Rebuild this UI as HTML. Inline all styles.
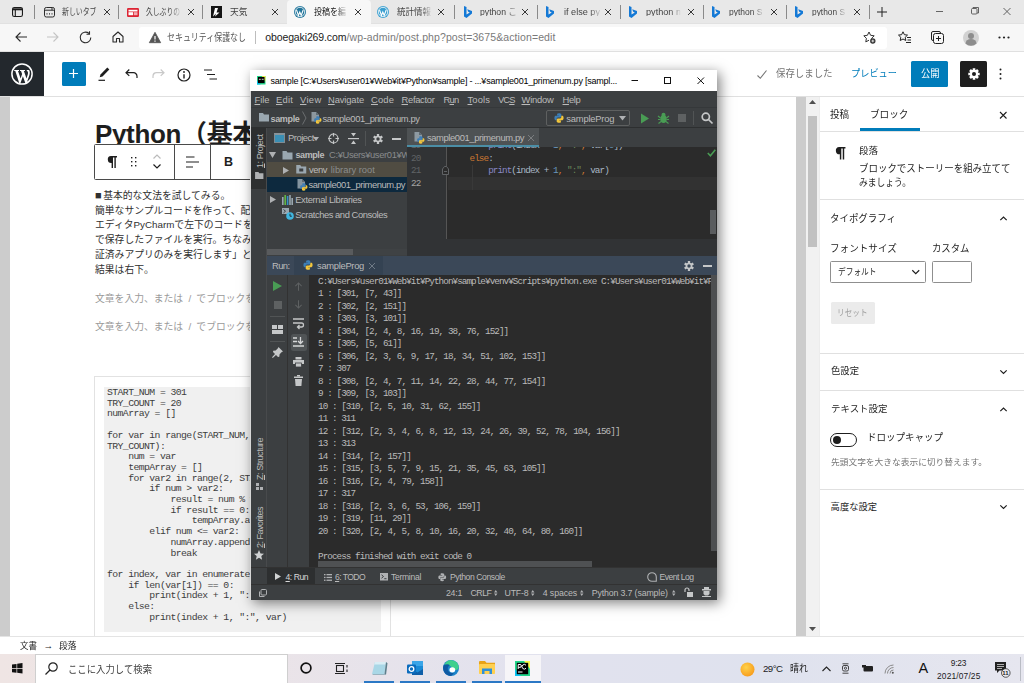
<!DOCTYPE html>
<html lang="ja">
<head>
<meta charset="utf-8">
<title>screenshot</title>
<style>
*{box-sizing:border-box;margin:0;padding:0}
html,body{width:1024px;height:683px;overflow:hidden;background:#fff}
body{position:relative;font-family:"Liberation Sans","Noto Sans CJK JP",sans-serif;font-size:10px;color:#1e1e1e}
.abs{position:absolute}
.t{position:absolute;white-space:nowrap;line-height:1}
svg{position:absolute;overflow:visible}
/* ---------- browser chrome ---------- */
#tabstrip{left:0;top:0;width:1024px;height:24px;background:#e8e8e8;border-bottom:1.500px solid #e1e1e1}
#toolbar{left:0;top:24px;width:1024px;height:28px;background:#f7f7f7;border-bottom:1px solid #e0e0e0}
#addr{left:139px;top:27px;width:748px;height:21.500px;background:#fff;border-radius:3px}
.tabtxt{position:absolute;top:6.500px;font-size:9.500px;color:#444;white-space:nowrap;line-height:1;overflow:hidden}
.tabx{position:absolute;top:5px;font-size:11px;color:#222;line-height:1}
.tabsep{position:absolute;top:5px;width:1px;height:14px;background:#8a8a8a}
/* ---------- WP ---------- */
#wphead{left:0;top:52px;width:1024px;height:44.600px;background:#fff;border-bottom:1px solid #e0e0e0}
#wplogo{left:0;top:52px;width:44px;height:44px;background:#23282d}
#leftstrip{left:0;top:96.600px;width:10px;height:539.400px;background:#cccccc}
#canvas{left:10px;top:96.600px;width:786px;height:539.400px;background:#fff}
#scroll{left:806px;top:96.600px;width:13px;height:539.400px;background:#f1f1f1}
#sidebar{left:819px;top:96.600px;width:205px;height:539.400px;background:#fff}
#footer{left:0;top:636px;width:1024px;height:18px;background:#fff;border-top:1px solid #e4e4e4}
#taskbar{left:0;top:654px;width:1024px;height:29px;background:linear-gradient(90deg,#efe5e4 0,#ebe4e8 25%,#e2e2ee 50%,#dfe2ee 75%,#e6e6ef 100%)}
/* ---------- PyCharm (children use page coords via #pcabs) ---------- */
#pc{left:250.400px;top:69.700px;width:466.600px;height:530px;background:#3c3f41;box-shadow:3px 3px 12px rgba(0,0,0,.5)}
#pcabs{position:absolute;left:-250.400px;top:-69.700px;width:1024px;height:683px}
#pcabs .b{position:absolute}
.ui{position:absolute;white-space:nowrap;line-height:12px;font-size:9.4px;color:#bbbbbb}
.con{position:absolute;font-family:"Liberation Mono","IPAGothic",monospace;font-size:9.3px;letter-spacing:-0.94px;color:#bbbbbb;white-space:pre;line-height:12.5px}
.kw{color:#cc7832}.bi{color:#8888c6}.nu{color:#6897bb}.st{color:#6a8759}
</style>
</head>
<body>
<!-- BROWSER -->
<div id="tabstrip" class="abs"></div>
<div id="toolbar" class="abs"></div>
<div class="abs" style="left:287px;top:0;width:84px;height:24.500px;background:#f7f7f7;border-radius:4px 4px 0 0"></div>
<div id="addr" class="abs"></div>
<!-- tab actions icon -->
<svg style="left:12px;top:6.500px" width="11" height="10" viewBox="0 0 11 10" fill="none" stroke="#1b1b1b" stroke-width="1.100"><rect x=".55" y=".55" width="9.900" height="8.900" rx="1.800"/><path d="M.6 2.300h9.800" stroke-width="2"/><path d="M3.300 2.500v7"/></svg>
<div class="tabsep" style="left:34px"></div>
<!-- tab 1 -->
<svg style="left:43.500px;top:6.500px" width="11" height="10.500" viewBox="0 0 11 10.500" fill="none" stroke="#2b2b2b" stroke-width="1"><rect x=".5" y=".5" width="10" height="9.500" rx="1.800"/><path d="M.5 3.200h7.500M8 .5v2.700h2.500"/><path d="M2.500 6.800h1M5 6.800h1M7.500 6.800h1" stroke-width="1.300"/></svg>
<div class="tabtxt" style="transform-origin:0 50%;transform:scaleX(0.7261);left:62.200px">新しいタブ</div>
<svg class="tx" style="left:104px;top:8.500px" width="6" height="6" viewBox="0 0 6 6" fill="none" stroke="#222" stroke-width=".9"><path d="M0 0l6 6M6 0l-6 6"/></svg>
<div class="tabsep" style="left:118px"></div>
<!-- tab 2 -->
<svg style="left:126.500px;top:7.500px" width="12" height="9" viewBox="0 0 12 9"><rect width="12" height="9" rx="1.200" fill="#dc2433"/><rect x="1.500" y="1.800" width="9" height="1.700" fill="#fff"/><rect x="1.500" y="4.200" width="4.600" height="3" fill="#fff"/><rect x="6.900" y="4.200" width="3.600" height="3" fill="#f4a9af"/></svg>
<div class="tabtxt" style="transform-origin:0 50%;transform:scaleX(0.7156);left:146px;-webkit-mask-image:linear-gradient(90deg,#000 70%,rgba(0,0,0,.15));mask-image:linear-gradient(90deg,#000 70%,rgba(0,0,0,.15))">久しぶりの</div>
<svg style="left:187.500px;top:8.500px" width="6" height="6" viewBox="0 0 6 6" fill="none" stroke="#222" stroke-width=".9"><path d="M0 0l6 6M6 0l-6 6"/></svg>
<div class="tabsep" style="left:202px"></div>
<!-- tab 3 -->
<svg style="left:210.500px;top:6px" width="11" height="12" viewBox="0 0 11 12"><rect width="11" height="12" fill="#151515"/><path d="M2 10.500L4 2h3L5.500 6.500h3L4 10.500l1-3z" fill="#fff"/></svg>
<div class="tabtxt" style="transform-origin:0 50%;transform:scaleX(0.9203);left:230px">天気</div>
<svg style="left:271.500px;top:8.500px" width="6" height="6" viewBox="0 0 6 6" fill="none" stroke="#222" stroke-width=".9"><path d="M0 0l6 6M6 0l-6 6"/></svg>
<!-- tab 4 active -->
<svg style="left:294px;top:5.500px" width="12" height="12" viewBox="0 0 12 12"><circle cx="6" cy="6" r="6" fill="#21759b"/><circle cx="6" cy="6" r="4.700" fill="none" stroke="#fff" stroke-width=".8"/><path d="M2.500 4l2 5.500l1.300-3.500l1.400 3.500l2-5.500" fill="none" stroke="#fff" stroke-width="1.100"/></svg>
<div class="tabtxt" style="transform-origin:0 50%;transform:scaleX(0.8418);left:314px;color:#222;-webkit-mask-image:linear-gradient(90deg,#000 70%,rgba(0,0,0,.15));mask-image:linear-gradient(90deg,#000 70%,rgba(0,0,0,.15))">投稿を編</div>
<svg style="left:354.500px;top:8.500px" width="6" height="6" viewBox="0 0 6 6" fill="none" stroke="#222" stroke-width=".9"><path d="M0 0l6 6M6 0l-6 6"/></svg>
<!-- tab 5 -->
<svg style="left:376.500px;top:5.500px" width="12" height="12" viewBox="0 0 12 12"><circle cx="6" cy="6" r="6" fill="#3a9fd0"/><circle cx="6" cy="6" r="4.700" fill="none" stroke="#fff" stroke-width=".8"/><path d="M2.500 4l2 5.500l1.300-3.500l1.400 3.500l2-5.500" fill="none" stroke="#fff" stroke-width="1.100"/></svg>
<div class="tabtxt" style="transform-origin:0 50%;transform:scaleX(0.8944);left:397px;-webkit-mask-image:linear-gradient(90deg,#000 70%,rgba(0,0,0,.15));mask-image:linear-gradient(90deg,#000 70%,rgba(0,0,0,.15))">統計情報</div>
<svg style="left:437.500px;top:8.500px" width="6" height="6" viewBox="0 0 6 6" fill="none" stroke="#222" stroke-width=".9"><path d="M0 0l6 6M6 0l-6 6"/></svg>
<div class="tabsep" style="left:453.500px"></div>
<!-- tabs 6-10 (bing) -->
<svg style="left:463.500px;top:5.500px" width="8" height="12" viewBox="0 0 8 12"><path d="M0 0l2.500 .9v7.600l3.300-1.900l-1.600-.8l-1-2.500l4.800 1.700v2.400L2.500 12L0 10.500z" fill="#1479d6"/></svg>
<div class="tabtxt" style="transform-origin:0 50%;transform:scaleX(0.9097);left:480px;-webkit-mask-image:linear-gradient(90deg,#000 70%,rgba(0,0,0,.15));mask-image:linear-gradient(90deg,#000 70%,rgba(0,0,0,.15))">python こ</div>
<svg style="left:521.500px;top:8.500px" width="6" height="6" viewBox="0 0 6 6" fill="none" stroke="#222" stroke-width=".9"><path d="M0 0l6 6M6 0l-6 6"/></svg>
<div class="tabsep" style="left:536.500px"></div>
<svg style="left:546px;top:5.500px" width="8" height="12" viewBox="0 0 8 12"><path d="M0 0l2.500 .9v7.600l3.300-1.900l-1.600-.8l-1-2.500l4.800 1.700v2.400L2.500 12L0 10.500z" fill="#1479d6"/></svg>
<div class="tabtxt" style="transform-origin:0 50%;transform:scaleX(0.9600);left:563.500px;-webkit-mask-image:linear-gradient(90deg,#000 70%,rgba(0,0,0,.15));mask-image:linear-gradient(90deg,#000 70%,rgba(0,0,0,.15))">if else py</div>
<svg style="left:605px;top:8.500px" width="6" height="6" viewBox="0 0 6 6" fill="none" stroke="#222" stroke-width=".9"><path d="M0 0l6 6M6 0l-6 6"/></svg>
<div class="tabsep" style="left:620px"></div>
<svg style="left:628.500px;top:5.500px" width="8" height="12" viewBox="0 0 8 12"><path d="M0 0l2.500 .9v7.600l3.300-1.900l-1.600-.8l-1-2.500l4.800 1.700v2.400L2.500 12L0 10.500z" fill="#1479d6"/></svg>
<div class="tabtxt" style="transform-origin:0 50%;transform:scaleX(0.9601);left:646px;-webkit-mask-image:linear-gradient(90deg,#000 70%,rgba(0,0,0,.15));mask-image:linear-gradient(90deg,#000 70%,rgba(0,0,0,.15))">python n</div>
<svg style="left:687.500px;top:8.500px" width="6" height="6" viewBox="0 0 6 6" fill="none" stroke="#222" stroke-width=".9"><path d="M0 0l6 6M6 0l-6 6"/></svg>
<div class="tabsep" style="left:703px"></div>
<svg style="left:712px;top:5.500px" width="8" height="12" viewBox="0 0 8 12"><path d="M0 0l2.500 .9v7.600l3.300-1.900l-1.600-.8l-1-2.500l4.800 1.700v2.400L2.500 12L0 10.500z" fill="#1479d6"/></svg>
<div class="tabtxt" style="transform-origin:0 50%;transform:scaleX(0.8933);left:728.500px;-webkit-mask-image:linear-gradient(90deg,#000 70%,rgba(0,0,0,.15));mask-image:linear-gradient(90deg,#000 70%,rgba(0,0,0,.15))">python S</div>
<svg style="left:770.500px;top:8.500px" width="6" height="6" viewBox="0 0 6 6" fill="none" stroke="#222" stroke-width=".9"><path d="M0 0l6 6M6 0l-6 6"/></svg>
<div class="tabsep" style="left:786px"></div>
<svg style="left:795px;top:5.500px" width="8" height="12" viewBox="0 0 8 12"><path d="M0 0l2.500 .9v7.600l3.300-1.900l-1.600-.8l-1-2.500l4.800 1.700v2.400L2.500 12L0 10.500z" fill="#1479d6"/></svg>
<div class="tabtxt" style="transform-origin:0 50%;transform:scaleX(0.8800);left:812px;-webkit-mask-image:linear-gradient(90deg,#000 70%,rgba(0,0,0,.15));mask-image:linear-gradient(90deg,#000 70%,rgba(0,0,0,.15))">python S</div>
<svg style="left:854px;top:8.500px" width="6" height="6" viewBox="0 0 6 6" fill="none" stroke="#222" stroke-width=".9"><path d="M0 0l6 6M6 0l-6 6"/></svg>
<div class="tabsep" style="left:869px"></div>
<svg style="left:877px;top:6.500px" width="10" height="10" viewBox="0 0 10 10" fill="none" stroke="#222" stroke-width="1"><path d="M5 0v10M0 5h10"/></svg>
<!-- window controls -->
<svg style="left:936px;top:7px" width="76" height="9" viewBox="0 0 76 9" fill="none" stroke="#555" stroke-width=".9"><path d="M0 4.500h7"/><rect x="35.500" y="1.500" width="5.500" height="5.500" rx="1"/><path d="M37 1.500v-1h5.500v5.500h-1.500"/><path d="M67.500 1l7 7M74.500 1l-7 7"/></svg>
<!-- toolbar icons -->
<svg style="left:14.500px;top:32px" width="12" height="10" viewBox="0 0 12 10" fill="none" stroke="#2a2a2a" stroke-width="1.100"><path d="M12 5H1M5.500 .5L1 5l4.500 4.500"/></svg>
<svg style="left:47px;top:32px" width="12" height="10" viewBox="0 0 12 10" fill="none" stroke="#c4c4c4" stroke-width="1.100"><path d="M0 5h11M6.500 .5L11 5L6.500 9.500"/></svg>
<svg style="left:79px;top:30.500px" width="13" height="13" viewBox="0 0 13 13" fill="none" stroke="#2a2a2a" stroke-width="1.100"><path d="M11.800 6.500A5.300 5.300 0 1 1 10 2.500"/><path d="M10.500 .3v3h-3"/></svg>
<svg style="left:112px;top:31px" width="12" height="12" viewBox="0 0 12 12" fill="none" stroke="#2a2a2a" stroke-width="1.100" stroke-linejoin="round"><path d="M1 5.500L6 1l5 4.500V11H7.500V7.500h-3V11H1z"/></svg>
<svg style="left:148.500px;top:31.500px" width="12" height="11" viewBox="0 0 12 11"><path d="M6 .3l5.700 10.400H.3z" fill="#555" stroke="#555" stroke-width=".8" stroke-linejoin="round"/><path d="M6 4v3.500M6 8.500v1.200" stroke="#fff" stroke-width="1.200"/></svg>
<div class="t" style="transform-origin:0 50%;transform:scaleX(0.7947);left:167px;top:32.500px;font-size:10px;color:#555">セキュリティ保護なし</div>
<div class="abs" style="left:255px;top:31px;width:1px;height:13px;background:#bdbdbd"></div>
<div class="t" style="letter-spacing:-0.127px;left:265.300px;top:32px;font-size:10.500px;color:#1b1b1b">oboegaki269.com</div>
<div class="t" style="letter-spacing:0.102px;left:346.500px;top:32px;font-size:10.500px;color:#7a7a7a">/wp-admin/post.php?post=3675&amp;action=edit</div>
<svg style="left:863px;top:31px" width="13" height="13" viewBox="0 0 13 13" fill="none" stroke="#333" stroke-width="1"><path d="M6 1l1.600 3.300l3.600 .5l-2.600 2.500l.3 1.200M6 1L4.400 4.300L.8 4.800l2.600 2.500l-.6 3.600L6 9.200"/><circle cx="9.800" cy="10" r="2.700" fill="#333" stroke="none"/><path d="M9.800 8.600v2.800M8.400 10h2.800" stroke="#fff" stroke-width=".8"/></svg>
<svg style="left:898px;top:31px" width="13" height="12" viewBox="0 0 13 12" fill="none" stroke="#222" stroke-width="1"><path d="M5 .8l1.400 2.900l3.100 .4L7.200 6.300l.6 3.200L5 8L2.200 9.500l.6-3.200L.5 4.100l3.100-.4z"/><path d="M9 6.500h4M9.500 9h3.500M8 11.500h5"/></svg>
<svg style="left:931px;top:31px" width="13" height="13" viewBox="0 0 13 13" fill="none" stroke="#222" stroke-width="1"><rect x="2.500" y="2.500" width="10" height="10" rx="2"/><path d="M2.500 9.500H2A1.500 1.500 0 0 1 .5 8V2A1.500 1.500 0 0 1 2 .5h6A1.500 1.500 0 0 1 9.500 2v.5M7.500 5v5M5 7.500h5"/></svg>
<svg style="left:963px;top:29.500px" width="16" height="16" viewBox="0 0 16 16"><circle cx="8" cy="8" r="8" fill="#d2d2d2"/><circle cx="8" cy="6" r="3" fill="#8d8d8d"/><path d="M2.500 13.500a5.500 4.500 0 0 1 11 0A8 8 0 0 1 2.500 13.500z" fill="#8d8d8d"/></svg>
<svg style="left:998px;top:36px" width="12" height="3" viewBox="0 0 12 3" fill="#222"><circle cx="1.500" cy="1.500" r="1.100"/><circle cx="6" cy="1.500" r="1.100"/><circle cx="10.500" cy="1.500" r="1.100"/></svg>

<!-- WP -->
<div id="wphead" class="abs"></div>
<div id="wplogo" class="abs"></div>
<svg style="left:11px;top:63px" width="22" height="22" viewBox="0 0 22 22"><circle cx="11" cy="11" r="10.100" fill="none" stroke="#fff" stroke-width="1.500"/><path d="M3.200 6.900h4.800v1.100h-1l2.600 7.400l1.500-4.300l-1.100-3.100h-1V6.900h5v1.100h-1.100l2.600 7.400l1.200-3.600c.6-1.800 .3-2.900-.5-3.800h-.4V6.900h2.300c.9 1.700 .9 3.400 .2 5.500l-2.700 7.600h-1.300l-2.400-6.700l-2.400 6.700H8.200L4.300 8H3.200z" fill="#fff"/></svg>
<div class="abs" style="left:62px;top:62px;width:23.500px;height:23.500px;background:#007cba;border-radius:1.500px"></div>
<svg style="left:69.300px;top:69.300px" width="9" height="9" viewBox="0 0 10 10" stroke="#fff" stroke-width="1.350" fill="none"><path d="M5 0v10M0 5h10"/></svg>
<svg style="left:98px;top:67px" width="12" height="15" viewBox="0 0 12 15"><path d="M9.300 .5l2 2L4.500 9.500l-2.800 .8l.8-2.800z" fill="#1e1e1e"/><path d="M.5 13.300h6.500" stroke="#1e1e1e" stroke-width="1.200"/></svg>
<svg style="left:125px;top:69px" width="13" height="9" viewBox="0 0 13 9" fill="none" stroke="#1e1e1e" stroke-width="1.200"><path d="M4.300 .5L1 3.700l3.300 3.200M1 3.700h7.500a3.500 3.500 0 0 1 3.500 3.500V9"/></svg>
<svg style="left:152px;top:69px" width="13" height="9" viewBox="0 0 13 9" fill="none" stroke="#c9c9c9" stroke-width="1.200"><path d="M8.700 .5L12 3.700L8.700 6.900M12 3.700H4.500A3.500 3.500 0 0 0 1 7.200V9"/></svg>
<svg style="left:177px;top:67.500px" width="14" height="14" viewBox="0 0 14 14" fill="none" stroke="#1e1e1e" stroke-width="1.200"><circle cx="7" cy="7" r="6"/><path d="M7 6.200v4.300" stroke-width="1.400"/><circle cx="7" cy="4" r=".9" fill="#1e1e1e" stroke="none"/></svg>
<svg style="left:204px;top:69px" width="13" height="11" viewBox="0 0 13 11" fill="none" stroke="#1e1e1e" stroke-width="1.200"><path d="M0 1h8M3 5.500h8M5.500 10h7.500"/></svg>
<!-- header right -->
<svg style="left:757px;top:69.500px" width="10" height="9" viewBox="0 0 10 9" fill="none" stroke="#757575" stroke-width="1.100"><path d="M.5 5.500l2.800 2.800L9.500 .5"/></svg>
<div class="t" style="transform-origin:0 50%;transform:scaleX(0.9720);left:775.500px;top:69px;font-size:9.700px;color:#757575">保存しました</div>
<div class="t" style="transform-origin:0 50%;transform:scaleX(0.9497);left:851px;top:69px;font-size:9.700px;color:#007cba">プレビュー</div>
<div class="abs" style="left:911.300px;top:61px;width:37px;height:26.200px;background:#007cba;border-radius:1.500px"></div>
<div class="t" style="transform-origin:0 50%;transform:scaleX(0.9548);left:921px;top:69px;font-size:9.700px;color:#fff">公開</div>
<div class="abs" style="left:960.300px;top:61px;width:27px;height:26.200px;background:#1e1e1e;border-radius:1.500px"></div>
<svg style="left:967.800px;top:68px" width="12" height="12" viewBox="0 0 12 12"><path d="M6 .3v11.400M.3 6h11.400M2 2l8 8M10 2l-8 8" stroke="#fff" stroke-width="2.600"/><circle cx="6" cy="6" r="4.200" fill="#fff"/><circle cx="6" cy="6" r="2" fill="#1e1e1e"/></svg>
<svg style="left:998.500px;top:68px" width="3" height="12" viewBox="0 0 3 12" fill="#1e1e1e"><circle cx="1.500" cy="1.500" r="1"/><circle cx="1.500" cy="6" r="1"/><circle cx="1.500" cy="10.500" r="1"/></svg>

<!-- canvas -->
<div id="leftstrip" class="abs"></div>
<div id="canvas" class="abs"></div>
<div class="abs" style="left:796px;top:96.600px;width:10px;height:539.400px;background:#cccccc"></div>
<div id="scroll" class="abs"></div>
<svg style="left:809px;top:100px" width="7" height="4" viewBox="0 0 7 4"><path d="M0 4h7L3.500 0z" fill="#505050"/></svg>
<svg style="left:809px;top:627px" width="7" height="4" viewBox="0 0 7 4"><path d="M0 0h7L3.500 4z" fill="#505050"/></svg>
<div class="abs" style="left:807.500px;top:115.500px;width:9px;height:131.500px;background:#c1c1c1"></div>

<div class="t" style="left:95px;top:119px;font-size:26px;font-weight:bold;color:#1e1e1e;line-height:30px;letter-spacing:-.35px">Python（基本文法）</div>
<!-- block toolbar -->
<div class="abs" style="left:94px;top:144px;width:170px;height:35.500px;background:#fff;border:1px solid #4a4a4a;border-radius:1.500px"></div>
<div class="abs" style="left:174px;top:144px;width:1px;height:35.500px;background:#4a4a4a"></div>
<div class="abs" style="left:210px;top:144px;width:1px;height:35.500px;background:#4a4a4a"></div>
<svg style="left:106.500px;top:155.500px" width="10" height="12" viewBox="0 0 10 12"><path d="M4 0h6v1.500H8.800V12H7.400V1.500H6V12H4.600V7A3.500 3.500 0 0 1 4 0z" fill="#1e1e1e"/></svg>
<svg style="left:131px;top:157px" width="6" height="10" viewBox="0 0 6 10" fill="#1e1e1e"><rect x="0" y="0" width="1.400" height="1.400"/><rect x="4" y="0" width="1.400" height="1.400"/><rect x="0" y="4" width="1.400" height="1.400"/><rect x="4" y="4" width="1.400" height="1.400"/><rect x="0" y="8" width="1.400" height="1.400"/><rect x="4" y="8" width="1.400" height="1.400"/></svg>
<svg style="left:152.500px;top:154px" width="8" height="15" viewBox="0 0 8 15" fill="none" stroke-width="1.200"><path d="M.5 4.500L4 1l3.500 3.500" stroke="#bbb"/><path d="M.5 10.500L4 14l3.500-3.500" stroke="#1e1e1e"/></svg>
<svg style="left:186px;top:156px" width="13" height="12" viewBox="0 0 13 12" fill="none" stroke="#1e1e1e" stroke-width="1.200"><path d="M0 1h8.500M0 6h13M0 11h7"/></svg>
<div class="t" style="left:224px;top:156.200px;font-size:12.500px;font-weight:bold;color:#1e1e1e">B</div>

<div class="t" style="left:95px;top:189px;font-size:9.800px;line-height:14.700px;color:#303030"><span style="font-size:11px;line-height:10px;margin-right:1.500px">■</span>基本的な文法を試してみる。<br>簡単なサンプルコードを作って、配列や繰り返し、条件分岐を確認する。<br>エディタPyCharmで左下のコードを入力して、sample001_primenum.pyという名前<br>で保存したファイルを実行。ちなみに初回は「スマートアプリコントロールは認<br>証済みアプリのみを実行します」という警告が出た。<br>結果は右下。</div>
<div class="t" style="left:95px;top:291.500px;font-size:9.800px;line-height:14.700px;color:#9a9a9a;word-spacing:2.500px">文章を入力、または / でブロックを選択</div>
<div class="t" style="left:95px;top:320.200px;font-size:9.800px;line-height:14.700px;color:#9a9a9a;word-spacing:2.500px">文章を入力、または / でブロックを選択</div>

<!-- code table -->
<div class="abs" style="left:94px;top:376px;width:297px;height:262px;border:1px solid #e2e2e2;border-bottom:none"></div>
<div class="abs" style="left:390px;top:376px;width:320px;height:1px;background:#e2e2e2"></div>
<div class="abs" style="left:104px;top:387px;width:277px;height:245px;background:#f0f0f0"></div>
<pre class="abs" style="left:107px;top:388px;font-family:'Liberation Mono','IPAGothic',monospace;font-size:9.800px;letter-spacing:-.59px;line-height:10.700px;color:#3d3d3d;white-space:pre">START_NUM = 301
TRY_COUNT = 20
numArray = []

for var in range(START_NUM, START_NUM +
TRY_COUNT):
    num = var
    tempArray = []
    for var2 in range(2, START_NUM + TRY_COUNT):
        if num &gt; var2:
            result = num % var2
            if result == 0:
                tempArray.append(var2)
        elif num &lt;= var2:
            numArray.append([num, tempArray])
            break

for index, var in enumerate(numArray):
    if len(var[1]) == 0:
        print(index + 1, ":", var[0])
    else:
        print(index + 1, ":", var)</pre>

<!-- sidebar -->
<div id="sidebar" class="abs"></div>
<div class="abs" style="left:819px;top:96.600px;width:1px;height:539.400px;background:#ececec"></div>
<div class="t" style="transform-origin:0 50%;transform:scaleX(0.9806);left:830px;top:109.700px;font-size:9.700px;color:#1e1e1e">投稿</div>
<div class="t" style="transform-origin:0 50%;transform:scaleX(0.9935);left:870px;top:109.700px;font-size:9.700px;color:#1e1e1e">ブロック</div>
<div class="abs" style="left:860px;top:128.200px;width:60px;height:3.300px;background:#007cba"></div>
<div class="abs" style="left:820px;top:131px;width:204px;height:1px;background:#e0e0e0"></div>
<svg style="left:1000.300px;top:111.500px" width="6.500" height="6.500" viewBox="0 0 7 7" fill="none" stroke="#1e1e1e" stroke-width="1.150"><path d="M0 0l7 7M7 0l-7 7"/></svg>
<svg style="left:834.500px;top:147px" width="10.500" height="12.500" viewBox="0 0 10 12"><path d="M4 0h6v1.500H8.800V12H7.400V1.500H6V12H4.600V7A3.500 3.500 0 0 1 4 0z" fill="#1e1e1e"/></svg>
<div class="t" style="transform-origin:0 50%;transform:scaleX(1.0210);left:858.700px;top:146.500px;font-size:9.300px;color:#1e1e1e">段落</div>
<div class="t" style="transform-origin:0 50%;transform:scaleX(0.9774);left:858.700px;top:164px;font-size:9.700px;color:#1e1e1e">ブロックでストーリーを組み立てて</div>
<div class="t" style="transform-origin:0 50%;transform:scaleX(0.9036);left:858.700px;top:177.700px;font-size:9.700px;color:#1e1e1e">みましょう。</div>
<div class="abs" style="left:820px;top:198.800px;width:204px;height:1px;background:#e0e0e0"></div>
<div class="t" style="transform-origin:0 50%;transform:scaleX(0.9760);left:830px;top:213.500px;font-size:9.700px;color:#1e1e1e">タイポグラフィ</div>
<svg style="left:1000px;top:216px" width="7" height="4.500" viewBox="0 0 7 4.500" fill="none" stroke="#1e1e1e" stroke-width="1.200"><path d="M.3 4.200L3.500 1l3.200 3.200"/></svg>
<div class="t" style="transform-origin:0 50%;transform:scaleX(0.9892);left:830px;top:243.700px;font-size:9.700px;color:#1e1e1e">フォントサイズ</div>
<div class="t" style="transform-origin:0 50%;transform:scaleX(0.9677);left:932px;top:243.700px;font-size:9.700px;color:#1e1e1e">カスタム</div>
<div class="abs" style="left:830px;top:260.800px;width:96px;height:21.800px;border:1px solid #8f8f8f;border-radius:1.500px;background:#fff"></div>
<div class="t" style="transform-origin:0 50%;transform:scaleX(0.8863);left:837.800px;top:267.500px;font-size:8.700px;color:#1e1e1e">デフォルト</div>
<svg style="left:912px;top:270px" width="7.500" height="4.500" viewBox="0 0 7.500 4.500" fill="none" stroke="#1e1e1e" stroke-width="1.200"><path d="M.3 .3L3.750 3.700L7.200 .3"/></svg>
<div class="abs" style="left:932px;top:260.800px;width:39.500px;height:21.800px;border:1px solid #8f8f8f;border-radius:1.500px;background:#fff"></div>
<div class="abs" style="left:830.500px;top:302px;width:44.200px;height:22px;background:#ebebeb;border-radius:1.500px"></div>
<div class="t" style="transform-origin:0 50%;transform:scaleX(0.8777);left:837px;top:308.500px;font-size:8.700px;color:#9e9e9e">リセット</div>
<div class="abs" style="left:820px;top:353px;width:204px;height:1px;background:#e0e0e0"></div>
<div class="t" style="transform-origin:0 50%;transform:scaleX(1.0034);left:830.600px;top:367px;font-size:9.300px;color:#1e1e1e">色設定</div>
<svg style="left:1000px;top:370px" width="7" height="4.500" viewBox="0 0 7 4.500" fill="none" stroke="#1e1e1e" stroke-width="1.200"><path d="M.3 .3L3.500 3.500L6.700 .3"/></svg>
<div class="abs" style="left:820px;top:390px;width:204px;height:1px;background:#e0e0e0"></div>
<div class="t" style="transform-origin:0 50%;transform:scaleX(1.0177);left:830.600px;top:404.500px;font-size:9.300px;color:#1e1e1e">テキスト設定</div>
<svg style="left:1000px;top:407px" width="7" height="4.500" viewBox="0 0 7 4.500" fill="none" stroke="#1e1e1e" stroke-width="1.200"><path d="M.3 4.200L3.500 1l3.200 3.200"/></svg>
<div class="abs" style="left:830px;top:433px;width:27px;height:13.500px;border:1px solid #1e1e1e;border-radius:7px;background:#fff"></div>
<div class="abs" style="left:832.500px;top:435.500px;width:8.500px;height:8.500px;border-radius:50%;background:#1e1e1e"></div>
<div class="t" style="transform-origin:0 50%;transform:scaleX(0.9806);left:866.800px;top:432.500px;font-size:9.700px;color:#1e1e1e">ドロップキャップ</div>
<div class="t" style="transform-origin:0 50%;transform:scaleX(1.0253);left:830.600px;top:457.500px;font-size:8.500px;color:#757575">先頭文字を大きな表示に切り替えます。</div>
<div class="abs" style="left:820px;top:488.500px;width:204px;height:1px;background:#e0e0e0"></div>
<div class="t" style="transform-origin:0 50%;transform:scaleX(1.0000);left:830.600px;top:502.500px;font-size:9.300px;color:#1e1e1e">高度な設定</div>
<svg style="left:1000px;top:505px" width="7" height="4.500" viewBox="0 0 7 4.500" fill="none" stroke="#1e1e1e" stroke-width="1.200"><path d="M.3 .3L3.500 3.500L6.700 .3"/></svg>

<!-- footer -->
<div id="footer" class="abs"></div>
<div class="t" style="transform-origin:0 50%;transform:scaleX(0.9784);left:19.500px;top:641.500px;font-size:8.700px;color:#1e1e1e">文書</div>
<div class="t" style="left:43.500px;top:640.500px;font-size:9.500px;color:#1e1e1e">→</div>
<div class="t" style="transform-origin:0 50%;transform:scaleX(1.0072);left:58.500px;top:641.500px;font-size:8.700px;color:#1e1e1e">段落</div>

<!-- PYCHARM -->
<div id="pc" class="abs"><div id="pcabs">
<!-- title bar -->
<div class="b" style="left:250.400px;top:69.700px;width:466.600px;height:21.300px;background:#fff"></div>
<svg style="left:257px;top:76px" width="8.500" height="8.500" viewBox="0 0 9 9"><rect width="9" height="9" fill="#21d789"/><path d="M5 0h4v6z" fill="#fcf84a"/><path d="M0 5v4h4z" fill="#07c3f2"/><rect x="1" y="1" width="7" height="6.500" fill="#000"/><path d="M2 3.500h2M5 3.500h2" stroke="#ddd" stroke-width="1"/></svg>
<div class="ui" style="letter-spacing:-0.217px;left:270.5px;top:74.5px;color:#000;font-size:9px">sample [C:¥Users¥user01¥Web¥it¥Python¥sample] - ...¥sample001_primenum.py [sampl...</div>
<svg style="left:630px;top:75px" width="80" height="11" viewBox="0 0 80 11" fill="none" stroke="#111" stroke-width="1"><path d="M1.5 5.5h6.5"/><rect x="34.5" y="2.5" width="6" height="6"/><path d="M67.5 2.5l6.5 6.5M74 2.5l-6.5 6.5"/></svg>
<div class="b" style="left:250.400px;top:91px;width:.6px;height:508.700px;background:#d6d6d6"></div>
<!-- menu bar -->
<div class="b" style="left:251px;top:91px;width:466px;height:16px;background:#3c3f41"></div>
<div class="ui" style="letter-spacing:-0.031px;left:254.5px;top:94px"><u>F</u>ile</div>
<div class="ui" style="letter-spacing:0.207px;left:276px;top:94px"><u>E</u>dit</div>
<div class="ui" style="letter-spacing:0.332px;left:300px;top:94px"><u>V</u>iew</div>
<div class="ui" style="letter-spacing:-0.127px;left:328px;top:94px"><u>N</u>avigate</div>
<div class="ui" style="letter-spacing:0.141px;left:371px;top:94px"><u>C</u>ode</div>
<div class="ui" style="letter-spacing:-0.307px;left:401.500px;top:94px"><u>R</u>efactor</div>
<div class="ui" style="letter-spacing:-0.740px;left:443.500px;top:94px">R<u>u</u>n</div>
<div class="ui" style="letter-spacing:0.122px;left:467.500px;top:94px"><u>T</u>ools</div>
<div class="ui" style="letter-spacing:-0.932px;left:498px;top:94px">VC<u>S</u></div>
<div class="ui" style="letter-spacing:-0.227px;left:521.500px;top:94px"><u>W</u>indow</div>
<div class="ui" style="letter-spacing:-0.324px;left:562.500px;top:94px"><u>H</u>elp</div>
<!-- nav bar -->
<div class="b" style="left:251px;top:107px;width:466px;height:21px;background:#3c3f41;border-top:1px solid #35383a;border-bottom:1px solid #2d2f30"></div>
<svg style="left:259px;top:113px" width="10" height="9" viewBox="0 0 10 9"><path d="M0 0h4l1 1.5h5v7H0z" fill="#9aa7b0"/></svg>
<div class="ui" style="letter-spacing:-0.339px;left:270.500px;top:112.700px;font-weight:bold;font-size:9px">sample</div>
<svg style="left:302px;top:111px" width="5" height="14" viewBox="0 0 5 14" fill="none" stroke="#6b6e70" stroke-width="1"><path d="M.5 .5l3.500 6.500l-3.500 6.500"/></svg>
<svg style="left:311px;top:112px" width="11" height="12" viewBox="0 0 11 12"><path d="M.5 0h4.500l3 3v6.500H.5z" fill="#9aa7b0" opacity=".85"/><path d="M5 0v3h3z" fill="#5f6b73"/><g transform="translate(2.800 4) scale(.8)"><path d="M4.900 .300C3 .300 3.100 1.100 3.100 1.100V2.400H5V2.800H2C2 2.800 .400 2.600 .400 5C.400 7.400 1.800 7.200 1.800 7.200H2.700V6C2.700 6 2.600 4.600 4.100 4.600H6C6 4.600 7.300 4.600 7.300 3.300V1.500C7.300 1.500 7.500 .300 4.900 .300z" fill="#3d7eb5"/><path d="M4.900 .300C3 .300 3.100 1.100 3.100 1.100V2.400H5V2.800H2C2 2.800 .400 2.600 .400 5C.400 7.400 1.800 7.200 1.800 7.200H2.700V6C2.700 6 2.600 4.600 4.100 4.600H6C6 4.600 7.300 4.600 7.300 3.300V1.500C7.300 1.500 7.500 .300 4.900 .300z" fill="#f2c63c" transform="rotate(180 5 5)"/></g></svg>
<div class="ui" style="letter-spacing:-0.394px;left:322.500px;top:112.700px">sample001_primenum.py</div>
<!-- run config -->
<div class="b" style="left:546.200px;top:110px;width:84.300px;height:16px;background:#3c3f41;border:1px solid #5e6060;border-radius:2px"></div>
<svg style="left:553.800px;top:113px" width="10" height="10" viewBox="0 0 10 10"><path d="M4.900 .300C3 .300 3.100 1.100 3.100 1.100V2.400H5V2.800H2C2 2.800 .400 2.600 .400 5C.400 7.400 1.800 7.200 1.800 7.200H2.700V6C2.700 6 2.600 4.600 4.100 4.600H6C6 4.600 7.300 4.600 7.300 3.300V1.500C7.300 1.500 7.500 .300 4.900 .300z" fill="#3d7eb5"/><path d="M4.900 .300C3 .300 3.100 1.100 3.100 1.100V2.400H5V2.800H2C2 2.800 .400 2.600 .400 5C.400 7.400 1.800 7.200 1.800 7.200H2.700V6C2.700 6 2.600 4.600 4.100 4.600H6C6 4.600 7.300 4.600 7.300 3.300V1.500C7.300 1.500 7.500 .300 4.900 .300z" fill="#f2c63c" transform="rotate(180 5 5)"/></svg>
<div class="ui" style="letter-spacing:-0.203px;left:566.300px;top:112.700px">sampleProg</div>
<svg style="left:619px;top:116px" width="7" height="5" viewBox="0 0 7 5"><path d="M0 0h7L3.500 4.500z" fill="#afb1b3"/></svg>
<svg style="left:640px;top:113px" width="10" height="11" viewBox="0 0 10 11"><path d="M1 0.500l8 5l-8 5z" fill="#499c54"/></svg>
<svg style="left:658px;top:112px" width="11" height="12" viewBox="0 0 11 12"><ellipse cx="5.500" cy="7" rx="3.200" ry="4" fill="#499c54"/><circle cx="5.500" cy="2.800" r="2" fill="#499c54"/><path d="M0 4l2.500 2M11 4l-2.500 2M0 7.500h2.500M11 7.500h-2.500M0.500 11.500l2.500-2M10.500 11.500l-2.500-2" stroke="#499c54" stroke-width="1.100" fill="none"/></svg>
<div class="b" style="left:678px;top:114px;width:8px;height:8px;background:#5e6162"></div>
<div class="b" style="left:693px;top:111px;width:1px;height:14px;background:#515455"></div>
<svg style="left:701px;top:112px" width="12" height="12" viewBox="0 0 12 12" fill="none" stroke="#c5c7c8" stroke-width="1.700"><circle cx="4.800" cy="4.800" r="3.600"/><path d="M7.500 7.500l4 4"/></svg>

<!-- left tool strip -->
<div class="b" style="left:251px;top:128px;width:16px;height:439px;background:#3c3f41;border-right:1px solid #484a4c"></div>
<div class="b" style="left:251px;top:128px;width:15px;height:60.500px;background:#2d2f30"></div>
<div class="ui" style="letter-spacing:-0.453px;left:253.800px;top:168.300px;transform-origin:0 0;transform:rotate(-90deg);font-size:9px"><u>1</u>: Project</div>
<svg style="left:254.700px;top:172px" width="8.500" height="7.500" viewBox="0 0 10 9"><path d="M0 0h4l1 1.500h5v7H0z" fill="#afb1b3"/></svg>
<div class="ui" style="letter-spacing:-0.418px;left:253.500px;top:480px;transform-origin:0 0;transform:rotate(-90deg);font-size:9px"><u>Z</u>: Structure</div>
<svg style="left:256px;top:483px" width="7" height="7" viewBox="0 0 7 7" fill="#afb1b3"><rect x="0" y="0" width="3" height="3"/><rect x="0" y="4" width="3" height="3"/><rect x="4" y="4" width="3" height="3"/></svg>
<div class="ui" style="letter-spacing:-0.503px;left:253.500px;top:548px;transform-origin:0 0;transform:rotate(-90deg);font-size:9px"><u>2</u>: Favorites</div>
<svg style="left:254px;top:550px" width="10" height="10" viewBox="0 0 10 10"><path d="M5 0l1.500 3.400l3.500 .300l-2.700 2.400l.800 3.600L5 7.800L1.900 9.700l.800-3.600L0 3.700l3.500-.300z" fill="#d0d2d3"/></svg>

<!-- project tool window -->
<div class="b" style="left:267px;top:128px;width:140px;height:128px;background:#3c3f41"></div>
<div class="b" style="left:274px;top:133.300px;width:10.800px;height:9.600px;background:#3a8fb5;border:1.400px solid #7f8b92;border-top:2.200px solid #87939a"></div>
<div class="ui" style="letter-spacing:-0.455px;left:288px;top:132px">Project</div>
<svg style="left:313px;top:137px" width="6" height="4" viewBox="0 0 6 4"><path d="M0 0h6L3 4z" fill="#afb1b3"/></svg>
<svg style="left:328px;top:133px" width="11" height="11" viewBox="0 0 11 11" fill="none" stroke="#c5c7c8" stroke-width="1.200"><circle cx="5.500" cy="5.500" r="4.500"/><path d="M5.500 0v3.500M5.500 11v-3.500M0 5.500h3.500M11 5.500h-3.500"/></svg>
<svg style="left:348px;top:133px" width="11" height="11" viewBox="0 0 11 11" fill="#c5c7c8"><rect x="0" y="5" width="11" height="1.200"/><path d="M3 0h5L5.500 3.500zM3 11h5L5.500 7.500z"/></svg>
<div class="b" style="left:365px;top:131px;width:1px;height:15px;background:#515455"></div>
<svg style="left:372.5px;top:133.5px" width="10" height="10" viewBox="0 0 10 10"><path d="M5 0v10M.67 2.500l8.660 5M.67 7.500l8.660-5" stroke="#c5c7c8" stroke-width="2.300"/><circle cx="5" cy="5" r="3.300" fill="#c5c7c8"/><circle cx="5" cy="5" r="1.700" fill="#3c3f41"/></svg>
<div class="b" style="left:392px;top:138px;width:9px;height:1.500px;background:#c5c7c8"></div>
<!-- tree rows -->
<div class="b" style="left:267px;top:162px;width:140px;height:15px;background:#504c42"></div>
<div class="b" style="left:267px;top:177px;width:140px;height:14.500px;background:#0d293e"></div>
<svg style="left:269px;top:152px" width="7" height="6" viewBox="0 0 7 6"><path d="M0 0h7L3.500 6z" fill="#afb1b3"/></svg>
<svg style="left:282px;top:150.500px" width="11" height="9" viewBox="0 0 10 9"><path d="M0 0h4l1 1.500h5v7H0z" fill="#9aa7b0"/></svg>
<div class="ui" style="letter-spacing:-0.422px;left:295.500px;top:149px;font-weight:bold;font-size:9px">sample</div>
<div class="b" style="left:329px;top:147px;width:78px;height:15px;overflow:hidden"><div class="ui" style="letter-spacing:-0.365px;left:0;top:2px;color:#8a8c8d">C:¥Users¥user01¥Web¥it¥Python</div></div>
<svg style="left:283px;top:166.500px" width="6" height="7" viewBox="0 0 6 7"><path d="M0 0v7L6 3.500z" fill="#afb1b3"/></svg>
<svg style="left:295.500px;top:165px" width="10.500" height="9" viewBox="0 0 10 9"><path d="M0 0h4l1 1.500h5v7H0z" fill="#9aa7b0"/><rect x="3" y="3.500" width="4" height="3" fill="#3c3f41"/></svg>
<div class="ui" style="letter-spacing:-0.453px;left:309px;top:164px">venv</div>
<div class="ui" style="letter-spacing:-0.025px;left:330.800px;top:164px;color:#8a8c8d">library root</div>
<svg style="left:296.500px;top:179px" width="11" height="12" viewBox="0 0 11 12"><path d="M.5 0h4.500l3 3v6.500H.5z" fill="#9aa7b0" opacity=".85"/><path d="M5 0v3h3z" fill="#5f6b73"/><g transform="translate(2.800 4) scale(.8)"><path d="M4.900 .300C3 .300 3.100 1.100 3.100 1.100V2.400H5V2.800H2C2 2.800 .400 2.600 .400 5C.400 7.400 1.800 7.200 1.800 7.200H2.700V6C2.700 6 2.600 4.600 4.100 4.600H6C6 4.600 7.300 4.600 7.300 3.300V1.500C7.300 1.500 7.500 .300 4.900 .300z" fill="#3d7eb5"/><path d="M4.900 .300C3 .300 3.100 1.100 3.100 1.100V2.400H5V2.800H2C2 2.800 .400 2.600 .400 5C.400 7.400 1.800 7.200 1.800 7.200H2.700V6C2.700 6 2.600 4.600 4.100 4.600H6C6 4.600 7.300 4.600 7.300 3.300V1.500C7.300 1.500 7.500 .300 4.900 .300z" fill="#f2c63c" transform="rotate(180 5 5)"/></g></svg>
<div class="ui" style="letter-spacing:-0.417px;left:308.500px;top:179px">sample001_primenum.py</div>
<svg style="left:270px;top:196px" width="6" height="7" viewBox="0 0 6 7"><path d="M0 0v7L6 3.500z" fill="#afb1b3"/></svg>
<svg style="left:282px;top:194.500px" width="11" height="10" viewBox="0 0 11 10"><rect x="0" y="2" width="1.600" height="8" fill="#9aa7b0"/><rect x="2.400" y="0" width="1.600" height="10" fill="#62b543"/><rect x="4.800" y="1" width="1.600" height="9" fill="#3592c4"/><rect x="7.200" y="0" width="1.600" height="10" fill="#9aa7b0"/><rect x="9.400" y="3" width="1.600" height="7" fill="#9aa7b0"/></svg>
<div class="ui" style="letter-spacing:-0.359px;left:295.200px;top:194px">External Libraries</div>
<svg style="left:282px;top:208px" width="12" height="12" viewBox="0 0 12 12"><path d="M0 0h7v6H0z" fill="#9aa7b0"/><path d="M1.500 1.500l2 1.700l-2 1.700" fill="none" stroke="#3c3f41" stroke-width="1"/><circle cx="8" cy="8" r="3.800" fill="#40b6e0"/><path d="M8 5.800v2.400h1.800" fill="none" stroke="#23323a" stroke-width="1"/></svg>
<div class="ui" style="letter-spacing:-0.438px;left:295.200px;top:209px">Scratches and Consoles</div>
<!-- project hscroll -->
<div class="b" style="left:267px;top:248.500px;width:140px;height:6.500px;background:#3f4244"></div>
<div class="b" style="left:267px;top:249px;width:86px;height:6px;background:#595b5d"></div>

<!-- editor -->
<div class="b" style="left:407px;top:128px;width:310px;height:128px;background:#3c3f41"></div>
<div class="b" style="left:407px;top:128px;width:132px;height:18.500px;background:#4e5254;border-bottom:2.500px solid #4b8ea6"></div>
<svg style="left:414px;top:131.500px" width="11" height="12" viewBox="0 0 11 12"><path d="M.5 0h4.500l3 3v6.500H.5z" fill="#9aa7b0" opacity=".85"/><path d="M5 0v3h3z" fill="#5f6b73"/><g transform="translate(2.800 4) scale(.8)"><path d="M4.900 .300C3 .300 3.100 1.100 3.100 1.100V2.400H5V2.800H2C2 2.800 .400 2.600 .400 5C.400 7.400 1.800 7.200 1.800 7.200H2.700V6C2.700 6 2.600 4.600 4.100 4.600H6C6 4.600 7.300 4.600 7.300 3.300V1.500C7.300 1.500 7.500 .300 4.900 .300z" fill="#3d7eb5"/><path d="M4.900 .300C3 .300 3.100 1.100 3.100 1.100V2.400H5V2.800H2C2 2.800 .400 2.600 .400 5C.400 7.400 1.800 7.200 1.800 7.200H2.700V6C2.700 6 2.600 4.600 4.100 4.600H6C6 4.600 7.300 4.600 7.300 3.300V1.500C7.300 1.500 7.500 .300 4.900 .300z" fill="#f2c63c" transform="rotate(180 5 5)"/></g></svg>
<div class="ui" style="letter-spacing:-0.394px;left:427px;top:132px">sample001_primenum.py</div>
<svg style="left:528px;top:135px" width="6" height="6" viewBox="0 0 6 6" fill="none" stroke="#7b7e80" stroke-width="1"><path d="M0 0l6 6M6 0l-6 6"/></svg>
<div class="b" style="left:407px;top:146.500px;width:310px;height:92.500px;background:#2b2b2b;overflow:hidden">
 <div class="b" style="left:0;top:0;width:40px;height:93px;background:#313335;border-right:1px solid #555"></div>
 <div class="b" style="left:41px;top:30.500px;width:269px;height:12.500px;background:#323232"></div>
 <div class="b" style="left:65px;top:18px;width:1px;height:25px;background:#393939"></div>
 <pre class="con" style="left:4px;top:-6.300px;color:#606366">19
20
21
<span style="color:#a4a3a3">22</span></pre>
 <pre class="con" style="left:44px;top:-6.300px;color:#a9b7c6">        <span class="bi">print</span>(index + <span class="nu">1</span><span class="kw">,</span> <span class="st">":"</span><span class="kw">,</span> var[<span class="nu">0</span>])
    <span class="kw">else</span>:
        <span class="bi">print</span>(index + <span class="nu">1</span><span class="kw">,</span> <span class="st">":"</span><span class="kw">,</span> var)
</pre>
 <svg style="left:35px;top:19px" width="7" height="9" viewBox="0 0 7 9" fill="#2b2b2b" stroke="#606366" stroke-width="1"><path d="M.5 8.500v-5.500l2-2.500h2l2 2.500v5.500z"/><path d="M2 5.500h3"/></svg>
 <svg style="left:300px;top:2px" width="9" height="8" viewBox="0 0 9 8" fill="none" stroke="#499c54" stroke-width="1.600"><path d="M.8 4l2.600 2.800L8.300 .8"/></svg>
 <div class="b" style="left:303px;top:63.500px;width:5.500px;height:24px;background:#5a5c5e"></div>
</div>

<div class="b" style="left:407px;top:239px;width:310px;height:17px;background:#313335"></div>
<!-- run tool window -->
<div class="b" style="left:267px;top:256px;width:450px;height:18.500px;background:#3b4858"></div>
<div class="b" style="left:294px;top:256px;width:89px;height:18.500px;background:#344252"></div>
<div class="ui" style="letter-spacing:-0.578px;left:272px;top:259.500px">Run:</div>
<svg style="left:303px;top:260px" width="10" height="10" viewBox="0 0 10 10"><path d="M4.900 .300C3 .300 3.100 1.100 3.100 1.100V2.400H5V2.800H2C2 2.800 .400 2.600 .400 5C.400 7.400 1.800 7.200 1.800 7.200H2.700V6C2.700 6 2.600 4.600 4.100 4.600H6C6 4.600 7.300 4.600 7.300 3.300V1.500C7.300 1.500 7.500 .300 4.900 .300z" fill="#3d7eb5"/><path d="M4.900 .300C3 .300 3.100 1.100 3.100 1.100V2.400H5V2.800H2C2 2.800 .400 2.600 .400 5C.400 7.400 1.800 7.200 1.800 7.200H2.700V6C2.700 6 2.600 4.600 4.100 4.600H6C6 4.600 7.300 4.600 7.300 3.300V1.500C7.300 1.500 7.500 .300 4.900 .300z" fill="#f2c63c" transform="rotate(180 5 5)"/></svg>
<div class="ui" style="letter-spacing:-0.303px;left:317px;top:259.500px">sampleProg</div>
<svg style="left:369px;top:263px" width="6" height="6" viewBox="0 0 6 6" fill="none" stroke="#6f7a86" stroke-width="1"><path d="M0 0l6 6M6 0l-6 6"/></svg>
<svg style="left:683.5px;top:260.5px" width="10" height="10" viewBox="0 0 10 10"><path d="M5 0v10M.67 2.500l8.660 5M.67 7.500l8.660-5" stroke="#c5c7c8" stroke-width="2.300"/><circle cx="5" cy="5" r="3.300" fill="#c5c7c8"/><circle cx="5" cy="5" r="1.700" fill="#3b4858"/></svg>
<div class="b" style="left:703px;top:265px;width:9px;height:1.500px;background:#c5c7c8"></div>
<!-- run toolbars -->
<div class="b" style="left:267px;top:274.500px;width:42px;height:292.500px;background:#3c3f41"></div>
<div class="b" style="left:286.800px;top:274.500px;width:1px;height:292.500px;background:#323232"></div>
<svg style="left:273px;top:281px" width="9" height="10" viewBox="0 0 9 10"><path d="M0 0l9 5l-9 5z" fill="#499c54"/></svg>
<div class="b" style="left:273.500px;top:301px;width:8px;height:8px;background:#5e6162"></div>
<div class="b" style="left:269.500px;top:316px;width:15px;height:1px;background:#515455"></div>
<svg style="left:272px;top:324.500px" width="11" height="9" viewBox="0 0 11 9" fill="#c5c7c8"><rect x="0" y="0" width="5" height="4"/><rect x="6" y="0" width="5" height="4"/><rect x="0" y="5" width="11" height="4"/></svg>
<div class="b" style="left:269.500px;top:341px;width:15px;height:1px;background:#515455"></div>
<svg style="left:272px;top:347px" width="11" height="11" viewBox="0 0 11 11" fill="#c5c7c8"><path d="M6.500 0l4.500 4.500l-1.200 .600l-2.200 2.200l-.300 2.500l-1.300 .200l-2-2l-3.200 3l-.800-.800l3-3.200l-2-2l.200-1.300l2.500-.300l2.200-2.200z"/></svg>
<svg style="left:295px;top:281.500px" width="7" height="9" viewBox="0 0 9 11" fill="none" stroke="#5e6162" stroke-width="1.300"><path d="M4.500 11V1M.5 5l4-4l4 4"/></svg>
<svg style="left:295px;top:300px" width="7" height="9" viewBox="0 0 9 11" fill="none" stroke="#5e6162" stroke-width="1.300"><path d="M4.500 0v10M.5 6l4 4l4-4"/></svg>
<svg style="left:293px;top:318px" width="11" height="10" viewBox="0 0 11 10" fill="none" stroke="#c5c7c8" stroke-width="1.300"><path d="M0 1h11M0 5h8.500a2 2 0 0 1 0 4H5M6.500 7l-2 2l2 2"/></svg>
<div class="b" style="left:290.500px;top:334px;width:16.500px;height:16.500px;background:#505456;border-radius:2.500px"></div>
<svg style="left:293px;top:337px" width="11" height="10" viewBox="0 0 11 10" fill="none" stroke="#d5d7d8" stroke-width="1.300"><path d="M0 1h4M0 4.500h4M0 9h11M7.500 0v6.500M5 4l2.500 2.500L10 4"/></svg>
<svg style="left:293px;top:356.500px" width="11" height="10" viewBox="0 0 11 10" fill="#c5c7c8"><rect x="2.500" y="0" width="6" height="2.500"/><rect x="0" y="3" width="11" height="4"/><rect x="2.500" y="6" width="6" height="4" stroke="#3c3f41" stroke-width=".8"/></svg>
<svg style="left:294px;top:375px" width="9" height="11" viewBox="0 0 9 11" fill="#c5c7c8"><rect x="0" y="1.500" width="9" height="1.500"/><rect x="3" y="0" width="3" height="1.500"/><path d="M1 4h7l-.600 7h-5.800z"/></svg>
<!-- console -->
<div class="b" style="left:309px;top:274.500px;width:408px;height:292.500px;background:#2b2b2b;overflow:hidden">
<pre class="con" style="left:9px;top:1px">C:¥Users¥user01¥Web¥it¥Python¥sample¥venv¥Scripts¥python.exe C:¥Users¥user01¥Web¥it¥Python¥sample¥sample001_primenum.py
1 : [301, [7, 43]]
2 : [302, [2, 151]]
3 : [303, [3, 101]]
4 : [304, [2, 4, 8, 16, 19, 38, 76, 152]]
5 : [305, [5, 61]]
6 : [306, [2, 3, 6, 9, 17, 18, 34, 51, 102, 153]]
7 : 307
8 : [308, [2, 4, 7, 11, 14, 22, 28, 44, 77, 154]]
9 : [309, [3, 103]]
10 : [310, [2, 5, 10, 31, 62, 155]]
11 : 311
12 : [312, [2, 3, 4, 6, 8, 12, 13, 24, 26, 39, 52, 78, 104, 156]]
13 : 313
14 : [314, [2, 157]]
15 : [315, [3, 5, 7, 9, 15, 21, 35, 45, 63, 105]]
16 : [316, [2, 4, 79, 158]]
17 : 317
18 : [318, [2, 3, 6, 53, 106, 159]]
19 : [319, [11, 29]]
20 : [320, [2, 4, 5, 8, 10, 16, 20, 32, 40, 64, 80, 160]]

Process finished with exit code 0</pre>
<div class="b" style="left:9px;top:286.500px;width:274px;height:6px;background:#4f5153"></div>
<div class="b" style="left:402px;top:0;width:5.500px;height:276px;background:#4d4f51"></div>
</div>

<!-- bottom tool strip -->
<div class="b" style="left:251px;top:567px;width:466px;height:16.500px;background:#3c3f41;border-top:1px solid #323232"></div>
<div class="b" style="left:266.500px;top:568px;width:48px;height:15.500px;background:#2d2f30"></div>
<svg style="left:275px;top:573px" width="6" height="7" viewBox="0 0 6 7"><path d="M0 0v7L6 3.500z" fill="#d0d2d3"/></svg>
<div class="ui" style="letter-spacing:-0.471px;left:285.500px;top:571.300px;font-size:8.600px;color:#d8d8d8"><u>4</u>: Run</div>
<svg style="left:323.500px;top:573.500px" width="8" height="7" viewBox="0 0 8 7" fill="#afb1b3"><rect x="0" y="0" width="1.500" height="1.300"/><rect x="2.500" y="0" width="5.500" height="1.300"/><rect x="0" y="2.800" width="1.500" height="1.300"/><rect x="2.500" y="2.800" width="5.500" height="1.300"/><rect x="0" y="5.600" width="1.500" height="1.300"/><rect x="2.500" y="5.600" width="5.500" height="1.300"/></svg>
<div class="ui" style="letter-spacing:-0.583px;left:335px;top:571.300px;font-size:8.600px"><u>6</u>: TODO</div>
<svg style="left:379.500px;top:573px" width="8" height="7.500" viewBox="0 0 8 7.500"><rect width="8" height="7.500" fill="#afb1b3"/><path d="M1.500 1.800l2 1.700l-2 1.700M4.300 5.700h2.200" fill="none" stroke="#3c3f41" stroke-width="1"/></svg>
<div class="ui" style="letter-spacing:-0.311px;left:391px;top:571.300px;font-size:8.600px">Terminal</div>
<svg style="left:437.500px;top:572.500px" width="8.500" height="8.500" viewBox="0 0 10 10"><path d="M4.900 .300C3 .300 3.100 1.100 3.100 1.100V2.400H5V2.800H2C2 2.800 .400 2.600 .400 5C.400 7.400 1.800 7.200 1.800 7.200H2.700V6C2.700 6 2.600 4.600 4.100 4.600H6C6 4.600 7.300 4.600 7.300 3.300V1.500C7.300 1.500 7.500 .300 4.900 .300z" fill="#afb1b3"/><path d="M4.900 .300C3 .300 3.100 1.100 3.100 1.100V2.400H5V2.800H2C2 2.800 .400 2.600 .400 5C.400 7.400 1.800 7.200 1.800 7.200H2.700V6C2.700 6 2.600 4.600 4.100 4.600H6C6 4.600 7.300 4.600 7.300 3.300V1.500C7.300 1.500 7.500 .300 4.900 .300z" fill="#afb1b3" transform="rotate(180 5 5)"/></svg>
<div class="ui" style="letter-spacing:-0.406px;left:450px;top:571.300px;font-size:8.600px">Python Console</div>
<svg style="left:646.500px;top:572px" width="10" height="10" viewBox="0 0 10 10" fill="none" stroke="#afb1b3" stroke-width="1.100"><path d="M9.300 9.300H5A4.300 4.300 0 1 1 9.300 5z"/></svg>
<div class="ui" style="letter-spacing:-0.523px;left:659.500px;top:571.300px;font-size:8.600px">Event Log</div>
<!-- status bar -->
<div class="b" style="left:251px;top:583.500px;width:466px;height:16.500px;background:#3c3f41;border-top:1px solid #323232"></div>
<svg style="left:259px;top:588.800px" width="8" height="8" viewBox="0 0 8 8" fill="none" stroke="#afb1b3" stroke-width="1"><rect x="2" y=".5" width="5.500" height="5.500" rx="1"/><path d="M.5 2.500v5h5"/></svg>
<div class="ui" style="letter-spacing:-0.281px;left:446px;top:586.800px;font-size:8.800px">24:1</div>
<div class="ui" style="letter-spacing:-0.496px;left:470.500px;top:586.800px;font-size:8.800px">CRLF</div>
<div class="ui" style="letter-spacing:-0.184px;left:504.500px;top:586.800px;font-size:8.800px">UTF-8</div>
<div class="ui" style="letter-spacing:-0.090px;left:542.700px;top:586.800px;font-size:8.800px">4 spaces</div>
<div class="ui" style="letter-spacing:-0.144px;left:591.700px;top:586.800px;font-size:8.800px">Python 3.7 (sample)</div>
<svg style="left:493.500px;top:589.800px" width="3.500" height="6" viewBox="0 0 4 7" fill="#afb1b3"><path d="M0 2.800h4L2 0zM0 4.200h4L2 7z"/></svg>
<svg style="left:531px;top:589.800px" width="3.500" height="6" viewBox="0 0 4 7" fill="#afb1b3"><path d="M0 2.800h4L2 0zM0 4.200h4L2 7z"/></svg>
<svg style="left:579.500px;top:589.800px" width="3.500" height="6" viewBox="0 0 4 7" fill="#afb1b3"><path d="M0 2.800h4L2 0zM0 4.200h4L2 7z"/></svg>
<svg style="left:672.300px;top:589.800px" width="3.500" height="6" viewBox="0 0 4 7" fill="#afb1b3"><path d="M0 2.800h4L2 0zM0 4.200h4L2 7z"/></svg>
<svg style="left:683.500px;top:586.500px" width="9" height="10" viewBox="0 0 9 10"><rect x="3" y="5" width="6" height="5" fill="#c5c7c8"/><path d="M1 5V3a2 2 0 0 1 4 0v1" fill="none" stroke="#c5c7c8" stroke-width="1.200"/></svg>
<svg style="left:702px;top:586.500px" width="9" height="10" viewBox="0 0 9 10" fill="#c5c7c8"><rect x="2" y="0" width="5" height="2"/><rect x="0" y="2" width="9" height="1.500"/><path d="M1.500 4h6v3l-1.500 1.500h-3L1.500 7z"/><rect x="0" y="9" width="9" height="1"/></svg>
</div></div>

<!-- TASKBAR -->
<div id="taskbar" class="abs"></div>
<svg style="left:12.300px;top:663px" width="10.500" height="10.500" viewBox="0 0 10.500 10.500" fill="#111"><path d="M0 1.500L4.500 .9V5H0zM5.200 .8L10.500 0V5H5.200zM0 5.700h4.500v4.100L0 9.200zM5.200 5.700h5.300v4.800l-5.300-.8z"/></svg>
<div class="abs" style="left:35.300px;top:654.300px;width:252.700px;height:29px;background:#fff;border:1px solid #cfcfcf;border-bottom:none"></div>
<svg style="left:45px;top:661.500px" width="13" height="13" viewBox="0 0 13 13" fill="none" stroke="#222" stroke-width="1.200"><circle cx="8" cy="5" r="4.200"/><path d="M5 8L.5 12.500"/></svg>
<div class="t" style="transform-origin:0 50%;transform:scaleX(0.8918);left:68px;top:663.500px;font-size:10.500px;color:#444">ここに入力して検索</div>
<svg style="left:299.500px;top:662px" width="12" height="12" viewBox="0 0 12 12" fill="none" stroke="#111" stroke-width="1.700"><circle cx="6" cy="6" r="4.900"/></svg>
<svg style="left:334px;top:662.500px" width="14" height="11" viewBox="0 0 14 11" fill="none" stroke="#222" stroke-width="1.100"><rect x="2.500" y="2.500" width="7" height="6"/><path d="M1 .5h10M1 10.500h10M13 2v2.500M13 6.500v2.500"/></svg>
<!-- notepad-like -->
<svg style="left:371px;top:661px" width="17" height="15" viewBox="0 0 17 15"><path d="M4 1h11l-1.500 12H1z" fill="#a9d7e6"/><path d="M4 1h11l-.5 2.500H3.300z" fill="#d9eef5"/><path d="M15 1l1.500 1.200L15 13.800l-1.500-.8z" fill="#5d7f8c"/><path d="M1 13h12.500l1.500 .8H2.200z" fill="#7fa3b0"/></svg>
<div class="abs" style="left:364px;top:680.500px;width:29.500px;height:2.500px;background:#2b78c5"></div>
<!-- outlook -->
<svg style="left:407px;top:660.500px" width="16" height="15" viewBox="0 0 16 15"><rect x="5" y="0" width="11" height="14" rx="1" fill="#1a8ad6"/><rect x="5" y="0" width="11" height="5" fill="#3aa5e8"/><path d="M5 8l5.500 3.500L16 8v6H5z" fill="#0f5fa8"/><rect x="0" y="3.500" width="9" height="9" rx="1" fill="#0b6cbd"/><circle cx="4.500" cy="8" r="2.300" fill="none" stroke="#fff" stroke-width="1.300"/></svg>
<div class="abs" style="left:399.500px;top:680.500px;width:30px;height:2.500px;background:#2b78c5"></div>
<!-- edge -->
<svg style="left:443px;top:660px" width="16" height="16" viewBox="0 0 16 16"><circle cx="8" cy="8" r="8" fill="#1b84c9"/><path d="M1 6A7.500 7.500 0 0 1 15.800 7c0 2-1.300 3-3 3H8.500c0-2 .5-3-.8-3.800C6 5.300 3 5.500 1 6z" fill="#3fd08d"/><path d="M8 16A8 8 0 0 1 .5 5.500c2-1.500 5-1.500 6.500-.3c-2 .8-2.700 3-2 5c.8 2.300 3.500 3.500 6 2.600A8 8 0 0 1 8 16z" fill="#0f5aa3"/><ellipse cx="9.300" cy="9.800" rx="2.900" ry="2.600" fill="#fff"/></svg>
<div class="abs" style="left:436px;top:680.500px;width:30px;height:2.500px;background:#2b78c5"></div>
<!-- explorer -->
<svg style="left:479px;top:661px" width="16" height="14" viewBox="0 0 16 14"><path d="M0 1.200C0 .5 .5 0 1.200 0H6l1.500 1.800H16V5H0z" fill="#e8a317"/><rect x="0" y="3" width="16" height="10" rx=".8" fill="#ffd04f"/><rect x="3" y="7.500" width="10" height="5.500" fill="#2f8fd8"/><rect x="5.500" y="10" width="5" height="3" fill="#ffd04f"/></svg>
<div class="abs" style="left:472px;top:680.500px;width:29.500px;height:2.500px;background:#2b78c5"></div>
<!-- pycharm -->
<div class="abs" style="left:505px;top:654.500px;width:36px;height:28.500px;background:#f6f5f8"></div>
<svg style="left:515px;top:660.500px" width="15" height="15" viewBox="0 0 15 15"><rect width="15" height="15" fill="#21d789"/><path d="M9 0h6v8z" fill="#fcf84a"/><path d="M0 8v7h6z" fill="#07c3f2"/><rect x="1.800" y="1.800" width="11.400" height="11.400" fill="#000"/><rect x="3" y="10.500" width="4.500" height="1" fill="#fff"/><path d="M3.200 8V3.500h1.800a1.400 1.400 0 0 1 0 2.800H3.200M11 4.200A2.300 2.300 0 1 0 11 7.300" fill="none" stroke="#fff" stroke-width="1"/></svg>
<div class="abs" style="left:505px;top:680.500px;width:36px;height:2.500px;background:#2b78c5"></div>
<!-- tray -->
<svg style="left:740px;top:662px" width="15" height="15" viewBox="0 0 15 15"><defs><radialGradient id="sun" cx=".4" cy=".35" r=".7"><stop offset="0" stop-color="#ffd24a"/><stop offset="1" stop-color="#f79a1b"/></radialGradient></defs><circle cx="7.500" cy="7.500" r="7" fill="url(#sun)"/></svg>
<div class="t" style="letter-spacing:-0.539px;left:763px;top:664px;font-size:9.700px;color:#1b1b1b">29°C</div>
<div class="t" style="transform-origin:0 50%;transform:scaleX(0.9290);left:790px;top:664px;font-size:9.700px;color:#1b1b1b">晴れ</div>
<svg style="left:821.500px;top:665.500px" width="9" height="5.500" viewBox="0 0 9 5.500" fill="none" stroke="#222" stroke-width="1.100"><path d="M.5 5L4.500 1l4 4"/></svg>
<svg style="left:841px;top:663px" width="9" height="11" viewBox="0 0 9 11" fill="none" stroke="#333" stroke-width=".9"><rect x="1.500" y="2.500" width="6" height="5.500" rx="1.500"/><circle cx="4.500" cy="5.200" r="1.100"/><path d="M1.500 .8h6M1.500 10.200h6"/></svg>
<svg style="left:861.500px;top:665px" width="11" height="7" viewBox="0 0 11 7"><rect x="1.500" y="1" width="9.500" height="5.500" rx="1" fill="#222"/><rect x="0" y="0" width="4" height="2.500" fill="#222"/></svg>
<svg style="left:884px;top:664px" width="10" height="10" viewBox="0 0 10 10" fill="none" stroke="#8a8a8a" stroke-width="1"><path d="M1 9.500A8.500 8.500 0 0 1 9.500 1M3.500 9.500A6 6 0 0 1 9.500 3.500M6 9.500A3.500 3.500 0 0 1 9.500 6"/><circle cx="8.800" cy="8.800" r="1" fill="#555" stroke="none"/></svg>
<div class="t" style="left:918.500px;top:661px;font-size:14.500px;color:#111">A</div>
<div class="t" style="letter-spacing:-0.203px;left:950.700px;top:659px;font-size:8.400px;color:#1b1b1b">9:23</div>
<div class="t" style="letter-spacing:0.158px;left:937px;top:671.800px;font-size:8.400px;color:#1b1b1b">2021/07/25</div>
<svg style="left:994.500px;top:661.500px" width="16" height="16" viewBox="0 0 16 16"><path d="M0 0h11v8.500H4.500L2 11V8.500H0z" fill="#222"/><path d="M2 2.500h7M2 4.500h7M2 6.500h5" stroke="#eee" stroke-width=".7"/><circle cx="10.800" cy="11" r="4.300" fill="#e9e9ee" stroke="#333" stroke-width=".8"/></svg>
<div class="t" style="letter-spacing:0.078px;left:1002.200px;top:669.600px;font-size:6px;font-weight:bold;color:#222">11</div>
<div class="abs" style="left:1020px;top:657px;width:1px;height:24px;background:#b9bcc4"></div>

</body>
</html>
